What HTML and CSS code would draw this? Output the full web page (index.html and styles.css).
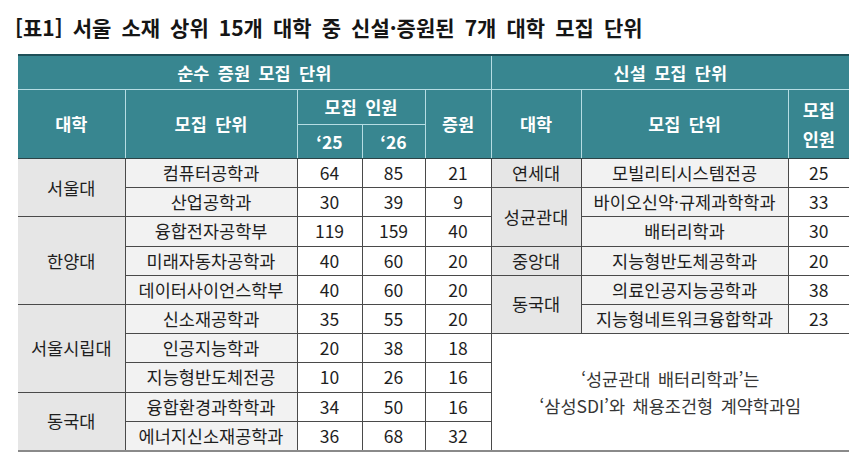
FILE: index.html
```html
<!DOCTYPE html>
<html lang="ko">
<head>
<meta charset="utf-8">
<title>표1</title>
<link rel="stylesheet" href="styles.css">
</head>
<body>
<div class="page">
<h1 class="title">[표1] 서울 소재 상위 15개 대학 중 신설·증원된 7개 대학 모집 단위</h1>
<table class="tbl">
<colgroup>
<col class="c-uni"><col class="c-dept"><col class="c-n25"><col class="c-n26"><col class="c-inc"><col class="c-uni2"><col class="c-dept2"><col class="c-num2">
</colgroup>
<thead>
<tr class="h1"><th colspan="5">순수 증원 모집 단위</th><th colspan="3">신설 모집 단위</th></tr>
<tr class="h2"><th rowspan="2">대학</th><th rowspan="2">모집 단위</th><th colspan="2">모집 인원</th><th rowspan="2">증원</th><th rowspan="2">대학</th><th rowspan="2">모집 단위</th><th rowspan="2" class="two">모집<br>인원</th></tr>
<tr class="h3"><th>‘25</th><th>‘26</th></tr>
</thead>
<tbody>
<tr><td rowspan="2" class="uni">서울대</td><td class="dept">컴퓨터공학과</td><td>64</td><td>85</td><td>21</td><td class="uni">연세대</td><td class="dept">모빌리티시스템전공</td><td>25</td></tr>
<tr><td class="dept">산업공학과</td><td>30</td><td>39</td><td>9</td><td rowspan="2" class="uni">성균관대</td><td class="dept">바이오신약·규제과학학과</td><td>33</td></tr>
<tr><td rowspan="3" class="uni">한양대</td><td class="dept">융합전자공학부</td><td>119</td><td>159</td><td>40</td><td class="dept">배터리학과</td><td>30</td></tr>
<tr><td class="dept">미래자동차공학과</td><td>40</td><td>60</td><td>20</td><td class="uni">중앙대</td><td class="dept">지능형반도체공학과</td><td>20</td></tr>
<tr><td class="dept">데이터사이언스학부</td><td>40</td><td>60</td><td>20</td><td rowspan="2" class="uni">동국대</td><td class="dept">의료인공지능공학과</td><td>38</td></tr>
<tr><td rowspan="3" class="uni">서울시립대</td><td class="dept">신소재공학과</td><td>35</td><td>55</td><td>20</td><td class="dept">지능형네트워크융합학과</td><td>23</td></tr>
<tr><td class="dept">인공지능학과</td><td>20</td><td>38</td><td>18</td><td colspan="3" rowspan="4" class="note">‘성균관대 배터리학과’는<br>‘삼성SDI’와 채용조건형 계약학과임</td></tr>
<tr><td class="dept">지능형반도체전공</td><td>10</td><td>26</td><td>16</td></tr>
<tr><td rowspan="2" class="uni">동국대</td><td class="dept">융합환경과학학과</td><td>34</td><td>50</td><td>16</td></tr>
<tr><td class="dept">에너지신소재공학과</td><td>36</td><td>68</td><td>32</td></tr>
</tbody>
</table>
</div>
</body>
</html>
```

FILE: styles.css
```css
html, body {
  margin: 0;
  padding: 0;
  background: #ffffff;
}

.page {
  padding: 15px 0 0 0;
  font-family: "Noto Sans CJK KR", "Noto Sans", sans-serif;
  color: #1e1e1e;
}

.title {
  margin: 0 0 14px 15px;
  font-size: 21px;
  line-height: 25px;
  font-weight: 700;
  color: #151515;
  word-spacing: 0.2em;
  white-space: nowrap;
}

.tbl {
  margin-left: 18px;
  width: 831px;
  table-layout: fixed;
  border-collapse: collapse;
  border-top: 2px solid #1f5058;
  border-bottom: 2px solid #8a8a8a;
  border-left: hidden;
  border-right: hidden;
  font-size: 17.5px;
}

.c-uni { width: 107px; }
.c-dept { width: 172px; }
.c-n25 { width: 65px; }
.c-n26 { width: 63px; }
.c-inc { width: 66px; }
.c-uni2 { width: 90px; }
.c-dept2 { width: 207px; }
.c-num2 { width: 61px; }

.tbl th {
  background: #388690;
  color: #ffffff;
  font-weight: 700;
  border: 1px solid #b6dde3;
  padding: 0;
  text-align: center;
  word-spacing: 0.2em;
  line-height: 22px;
}

.h1 th { height: 33px; }
.h2 th { height: 34px; }
.h3 th { height: 33px; }
.h2 th[rowspan], .h3 th { border-bottom: 1px solid #2d4346; }
.tbl th.two { line-height: 29px; }

.tbl td {
  height: 28.2px;
  padding: 0;
  text-align: center;
  border: 1px solid #4a4a4a;
  line-height: 22px;
  background: #ffffff;
  white-space: nowrap;
}

.tbl td.uni { background: #e6e6e6; }
.tbl td.dept { background: #f2f2f2; }

.tbl td.note {
  background: #ffffff;
  color: #363636;
  line-height: 27px;
  word-spacing: 0.15em;
  padding-top: 0;
}
```
